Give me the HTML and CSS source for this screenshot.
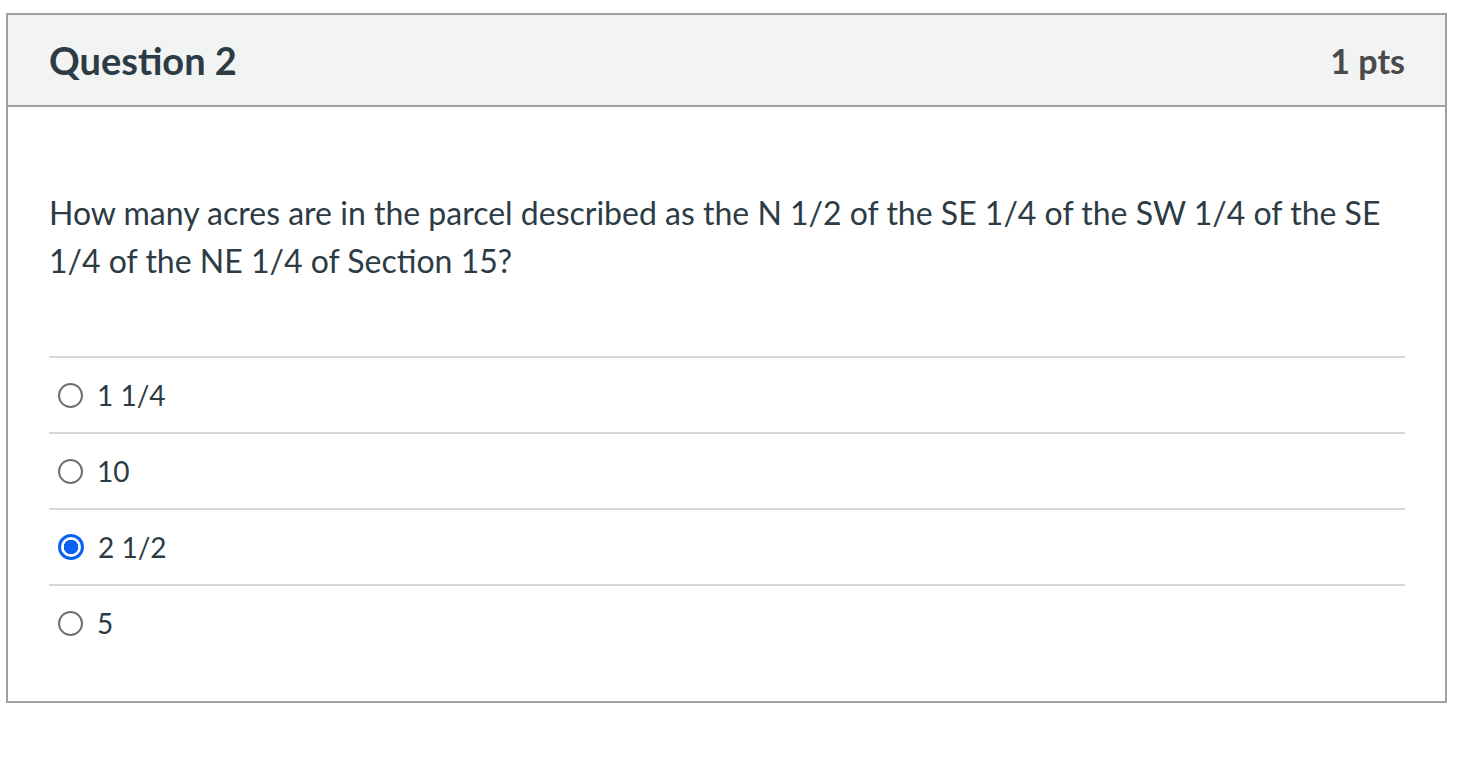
FILE: index.html
```html
<!DOCTYPE html>
<html>
<head>
<meta charset="utf-8">
<link rel="stylesheet" href="styles.css">
</head>
<body>
<div class="question">
  <div class="header">
    <h2 class="title">Question 2</h2>
    <div class="pts">1 pts</div>
  </div>
  <div class="content">
    <p class="text">How many acres are in the parcel described as the N 1/2 of the SE 1/4 of the SW 1/4 of the SE 1/4 of the NE 1/4 of Section 15?</p>
    <div class="answers">
      <label class="answer"><span class="radio"></span><span class="label">1 1/4</span></label>
      <label class="answer"><span class="radio"></span><span class="label">10</span></label>
      <label class="answer"><span class="radio checked"></span><span class="label">2 1/2</span></label>
      <label class="answer"><span class="radio"></span><span class="label">5</span></label>
    </div>
  </div>
</div>
</body>
</html>
```
FILE: styles.css
```css
html, body {
  margin: 0;
  padding: 0;
  background: #ffffff;
}
body {
  font-family: Lato, "Noto Sans", sans-serif;
  color: #2d3b45;
}
.question {
  margin: 13px 0 0 6px;
  width: 1437px;
  border: 2px solid #a0a0a0;
}
.header {
  display: flex;
  justify-content: space-between;
  align-items: center;
  height: 90px;
  padding: 0 40px 0 41px;
  background: #f2f3f3;
  border-bottom: 2px solid #a0a0a0;
}
.title {
  margin: 0;
  font-size: 38px;
  font-weight: 700;
  color: #2d3b45;
}
.pts {
  font-size: 34px;
  font-weight: 700;
  color: #4a4a4a;
}
.content {
  padding: 82px 40px 41px 41px;
}
.text {
  margin: 0 0 71px 0;
  font-size: 32px;
  line-height: 48px;
}
.answers {
  border-top: 2px solid #d8d8d8;
}
.answer {
  display: flex;
  align-items: center;
  height: 74px;
  border-bottom: 2px solid #d8d8d8;
}
.answer:last-child {
  border-bottom: none;
}
.radio {
  box-sizing: border-box;
  width: 25px;
  height: 25px;
  margin: 0 14px 0 9px;
  border: 2px solid #6f6f6f;
  border-radius: 50%;
  background: #fff;
}
.radio.checked {
  width: 26px;
  height: 26px;
  margin: 0 14px 0 9px;
  border: 3px solid #0a63f0;
  background: radial-gradient(circle, #0a63f0 0 7px, #fff 7.5px);
}
.label {
  font-size: 28px;
}
```
